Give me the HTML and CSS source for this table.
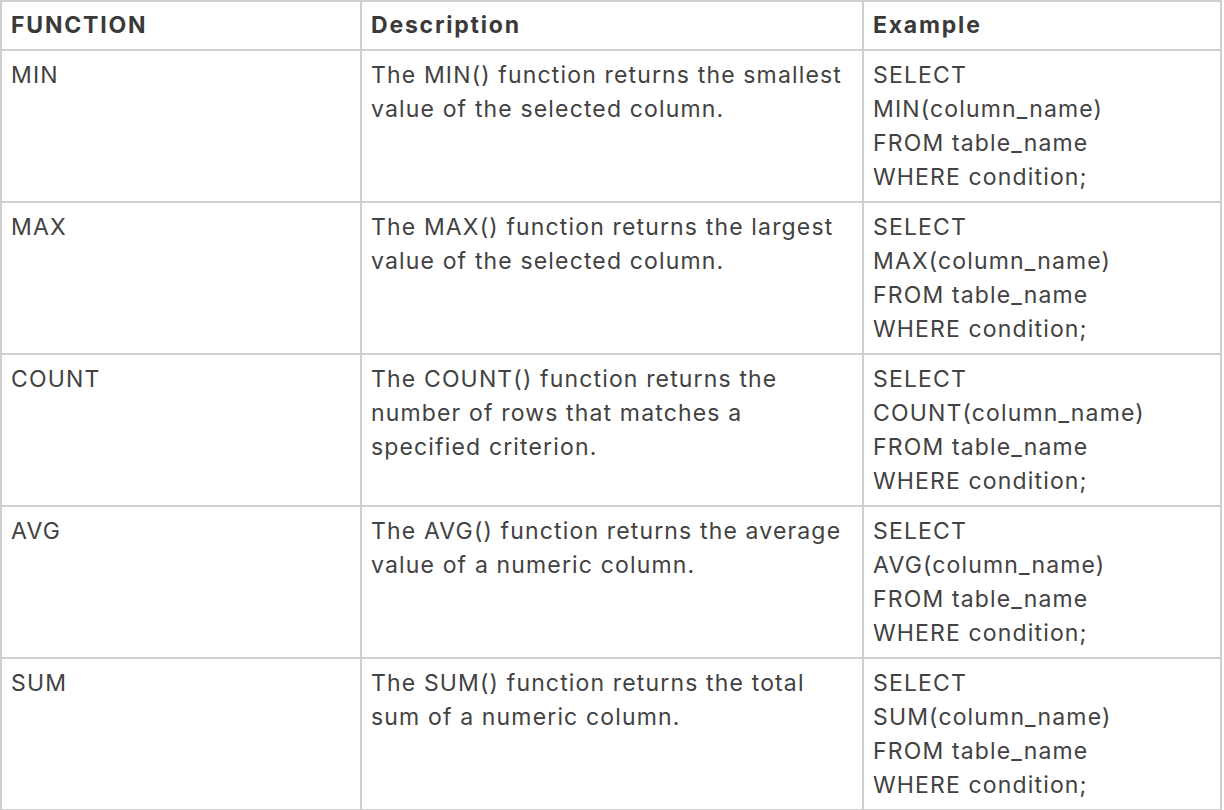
FILE: index.html
```html
<!DOCTYPE html>
<html lang="en">
<head>
<meta charset="utf-8">
<title>SQL Aggregate Functions</title>
<link rel="stylesheet" href="styles.css">
</head>
<body>
<div class="table">
  <div class="cell head">FUNCTION</div>
  <div class="cell head">Description</div>
  <div class="cell head">Example</div>

  <div class="cell">MIN</div>
  <div class="cell">The MIN() function returns the smallest value of the selected column.</div>
  <div class="cell">SELECT<br>MIN(column_name)<br>FROM table_name<br>WHERE condition;</div>

  <div class="cell">MAX</div>
  <div class="cell">The MAX() function returns the largest value of the selected column.</div>
  <div class="cell">SELECT<br>MAX(column_name)<br>FROM table_name<br>WHERE condition;</div>

  <div class="cell">COUNT</div>
  <div class="cell">The COUNT() function returns the number of rows that matches a specified criterion.</div>
  <div class="cell">SELECT<br>COUNT(column_name)<br>FROM table_name<br>WHERE condition;</div>

  <div class="cell">AVG</div>
  <div class="cell">The AVG() function returns the average value of a numeric column.</div>
  <div class="cell">SELECT<br>AVG(column_name)<br>FROM table_name<br>WHERE condition;</div>

  <div class="cell">SUM</div>
  <div class="cell">The SUM() function returns the total sum of a numeric column.</div>
  <div class="cell">SELECT<br>SUM(column_name)<br>FROM table_name<br>WHERE condition;</div>
</div>
</body>
</html>
```

FILE: styles.css
```css
html, body {
  margin: 0;
  padding: 0;
  background: #ffffff;
}

.table {
  display: grid;
  grid-template-columns: 358px 500px 356px;
  gap: 2px;
  padding: 2px;
  width: 1222px;
  box-sizing: border-box;
  background: #cfcfcf;
  font-family: Inter, "Noto Sans", sans-serif;
  font-size: 23px;
  line-height: 34px;
  letter-spacing: 1.15px;
  color: #424242;
}

.cell {
  background: #ffffff;
  padding: 7px 8px 7px 9px;
}

.head {
  font-weight: 700;
  color: #3a3a3a;
  letter-spacing: 1.8px;
  padding-top: 6px;
  padding-bottom: 7px;
}
```
